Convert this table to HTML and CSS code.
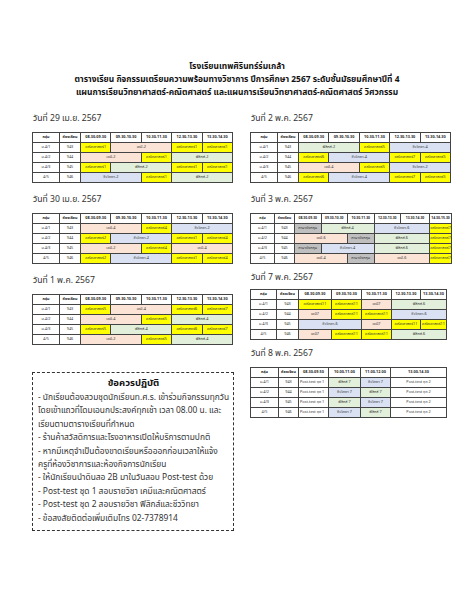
FILE: index.html
```html
<!DOCTYPE html>
<html lang="th">
<head>
<meta charset="utf-8">
<title>ตารางเรียน</title>
<link rel="stylesheet" href="styles.css">
</head>
<body>
<div class="page">
  <div class="title">
    <div>โรงเรียนเทพศิรินทร์ร่มเกล้า</div>
    <div>ตารางเรียน กิจกรรมเตรียมความพร้อมทางวิชาการ ปีการศึกษา 2567 ระดับชั้นมัธยมศึกษาปีที่ 4</div>
    <div>แผนการเรียนวิทยาศาสตร์-คณิตศาสตร์ และแผนการเรียนวิทยาศาสตร์-คณิตศาสตร์ วิศวกรรม</div>
  </div>
  <div class="cols">
    <div class="col col-left">
      <div class="day">วันที่ 29 เม.ย. 2567</div>
      <table class="sched s5">
        <colgroup><col class="cg"><col class="cr"><col><col><col><col><col></colgroup>
        <tr class="hd"><th>กลุ่ม</th><th>ห้องเรียน</th><th>08.30-09.30</th><th>09.30-10.30</th><th>10.30-11.30</th><th>12.30-13.30</th><th>13.30-14.30</th></tr>
        <tr><td>ม.4/1</td><td>943</td><td class="y">คณิตศาสตร์1</td><td class="p" colspan="2">เคมี-2</td><td class="y">คณิตศาสตร์1</td><td class="y">คณิตศาสตร์1</td></tr>
        <tr><td>ม.4/2</td><td>944</td><td class="p" colspan="2">เคมี-2</td><td class="y">คณิตศาสตร์1</td><td class="g" colspan="2">ฟิสิกส์-2</td></tr>
        <tr><td>ม.4/3</td><td>945</td><td class="y">คณิตศาสตร์1</td><td class="g" colspan="2">ฟิสิกส์-2</td><td class="y">คณิตศาสตร์1</td><td class="y">คณิตศาสตร์1</td></tr>
        <tr><td>4/5</td><td>946</td><td class="b" colspan="2">ชีววิทยา-2</td><td class="y">คณิตศาสตร์1</td><td class="g" colspan="2">ฟิสิกส์-2</td></tr>
      </table>

      <div class="day">วันที่ 30 เม.ย. 2567</div>
      <table class="sched s5">
        <colgroup><col class="cg"><col class="cr"><col><col><col><col><col></colgroup>
        <tr class="hd"><th>กลุ่ม</th><th>ห้องเรียน</th><th>08.30-09.30</th><th>09.30-10.30</th><th>10.30-11.30</th><th>12.30-13.30</th><th>13.30-14.30</th></tr>
        <tr><td>ม.4/1</td><td>943</td><td class="p" colspan="2">เคมี-4</td><td class="y">คณิตศาสตร์4</td><td class="b" colspan="2">ชีววิทยา-2</td></tr>
        <tr><td>ม.4/2</td><td>944</td><td class="y">คณิตศาสตร์2</td><td class="b" colspan="2">ชีววิทยา-2</td><td class="y">คณิตศาสตร์1</td><td class="y">คณิตศาสตร์4</td></tr>
        <tr><td>ม.4/3</td><td>945</td><td class="p" colspan="2">เคมี-2</td><td class="y">คณิตศาสตร์4</td><td class="p" colspan="2">เคมี-4</td></tr>
        <tr><td>4/5</td><td>946</td><td class="y">คณิตศาสตร์2</td><td class="b" colspan="2">ชีววิทยา-4</td><td class="y">คณิตศาสตร์1</td><td class="y">คณิตศาสตร์4</td></tr>
      </table>

      <div class="day">วันที่ 1 พ.ค. 2567</div>
      <table class="sched s5">
        <colgroup><col class="cg"><col class="cr"><col><col><col><col><col></colgroup>
        <tr class="hd"><th>กลุ่ม</th><th>ห้องเรียน</th><th>08.30-09.30</th><th>09.30-10.30</th><th>10.30-11.30</th><th>12.30-13.30</th><th>13.30-14.30</th></tr>
        <tr><td>ม.4/1</td><td>943</td><td class="y">คณิตศาสตร์5</td><td class="p" colspan="2">เคมี-4</td><td class="y">คณิตศาสตร์6</td><td class="y">คณิตศาสตร์7</td></tr>
        <tr><td>ม.4/2</td><td>944</td><td class="p" colspan="2">เคมี-4</td><td class="y">คณิตศาสตร์5</td><td class="g" colspan="2">ฟิสิกส์-4</td></tr>
        <tr><td>ม.4/3</td><td>945</td><td class="y">คณิตศาสตร์5</td><td class="g" colspan="2">ฟิสิกส์-4</td><td class="y">คณิตศาสตร์6</td><td class="y">คณิตศาสตร์7</td></tr>
        <tr><td>4/5</td><td>946</td><td class="p" colspan="2">เคมี-2</td><td class="y">คณิตศาสตร์5</td><td class="g" colspan="2">ฟิสิกส์-4</td></tr>
      </table>

      <div class="rules">
        <div class="rules-title">ข้อควรปฏิบัติ</div>
        <div class="rl">- นักเรียนต้องสวมชุดนักเรียนท.ศ.ร. เข้าร่วมกิจกรรมทุกวัน</div>
        <div class="rl">โดยเข้าแถวที่โดมเอนกประสงค์ทุกเช้า เวลา 08.00 น. และ</div>
        <div class="rl">เรียนตามตารางเรียนที่กำหนด</div>
        <div class="rl">- ร้านค้าสวัสดิการและโรงอาหารเปิดให้บริการตามปกติ</div>
        <div class="rl">- หากมีเหตุจำเป็นต้องขาดเรียนหรือออกก่อนเวลาให้แจ้ง</div>
        <div class="rl">ครูที่ห้องวิชาการและห้องกิจการนักเรียน</div>
        <div class="rl">- ให้นักเรียนนำดินสอ 2B มาในวันสอบ Post-test ด้วย</div>
        <div class="rl">- Post-test ชุด 1 สอบรายวิชา เคมีและคณิตศาสตร์</div>
        <div class="rl">- Post-test ชุด 2 สอบรายวิชา ฟิสิกส์และชีววิทยา</div>
        <div class="rl">- ข้อสงสัยติดต่อเพิ่มเติมโทร 02-7378914</div>
      </div>
    </div>

    <div class="col col-right">
      <div class="day">วันที่ 2 พ.ค. 2567</div>
      <table class="sched s5">
        <colgroup><col class="cg"><col class="cr"><col><col><col><col><col></colgroup>
        <tr class="hd"><th>กลุ่ม</th><th>ห้องเรียน</th><th>08.30-09.30</th><th>09.30-10.30</th><th>10.30-11.30</th><th>12.30-13.30</th><th>13.30-14.30</th></tr>
        <tr><td>ม.4/1</td><td>943</td><td class="g" colspan="2">ฟิสิกส์-2</td><td class="y">คณิตศาสตร์5</td><td class="b" colspan="2">ชีววิทยา-4</td></tr>
        <tr><td>ม.4/2</td><td>944</td><td class="y">คณิตศาสตร์6</td><td class="b" colspan="2">ชีววิทยา-4</td><td class="y">คณิตศาสตร์7</td><td class="y">คณิตศาสตร์5</td></tr>
        <tr><td>ม.4/3</td><td>945</td><td class="p" colspan="2">เคมี-4</td><td class="y">คณิตศาสตร์5</td><td class="b" colspan="2">ชีววิทยา-2</td></tr>
        <tr><td>4/5</td><td>946</td><td class="y">คณิตศาสตร์6</td><td class="b" colspan="2">ชีววิทยา-4</td><td class="y">คณิตศาสตร์7</td><td class="y">คณิตศาสตร์5</td></tr>
      </table>

      <div class="day">วันที่ 3 พ.ค. 2567</div>
      <table class="sched s6 tight">
        <colgroup><col class="cg2"><col class="cr2"><col><col><col><col><col class="c29"><col class="cl"></colgroup>
        <tr class="hd"><th>กลุ่ม</th><th>ห้องเรียน</th><th>08.30-09.30</th><th>09.30-10.30</th><th>10.30-11.30</th><th>12.30-13.30</th><th>13.30-14.30</th><th>14.30-15.30</th></tr>
        <tr><td>ม.4/1</td><td>943</td><td class="k">ภาษาอังกฤษ</td><td class="g" colspan="2">ฟิสิกส์-4</td><td class="b" colspan="2">ชีววิทยา-6</td><td class="y">คณิตศาสตร์7</td></tr>
        <tr><td>ม.4/2</td><td>944</td><td class="p" colspan="2">เคมี-6</td><td class="k">ภาษาอังกฤษ</td><td class="g" colspan="2">ฟิสิกส์-6</td><td class="y">คณิตศาสตร์7</td></tr>
        <tr><td>ม.4/3</td><td>945</td><td class="k">ภาษาอังกฤษ</td><td class="b" colspan="2">ชีววิทยา-4</td><td class="g" colspan="2">ฟิสิกส์-6</td><td class="y">คณิตศาสตร์7</td></tr>
        <tr><td>4/5</td><td>946</td><td class="p" colspan="2">เคมี-4</td><td class="k">ภาษาอังกฤษ</td><td class="p" colspan="2">เคมี-6</td><td class="y">คณิตศาสตร์7</td></tr>
      </table>

      <div class="day day-close">วันที่ 7 พ.ค. 2567</div>
      <table class="sched s7 tight">
        <colgroup><col class="c26"><col class="c22"><col class="c33"><col class="c30"><col class="c30"><col class="c29"><col></colgroup>
        <tr class="hd"><th>กลุ่ม</th><th>ห้องเรียน</th><th>08.30-09.30</th><th>09.30-10.30</th><th>10.30-11.30</th><th>12.30-13.30</th><th>13.30-14.30</th></tr>
        <tr><td>ม.4/1</td><td>943</td><td class="y">คณิตศาสตร์11</td><td class="y">คณิตศาสตร์11</td><td class="p">เคมี7</td><td class="g" colspan="2">ฟิสิกส์-6</td></tr>
        <tr><td>ม.4/2</td><td>944</td><td class="p">เคมี7</td><td class="y">คณิตศาสตร์11</td><td class="y">คณิตศาสตร์11</td><td class="b" colspan="2">ชีววิทยา-6</td></tr>
        <tr><td>ม.4/3</td><td>945</td><td class="b" colspan="2">ชีววิทยา-6</td><td class="p">เคมี7</td><td class="y">คณิตศาสตร์11</td><td class="y">คณิตศาสตร์11</td></tr>
        <tr><td>4/5</td><td>946</td><td class="p">เคมี7</td><td class="y">คณิตศาสตร์11</td><td class="y">คณิตศาสตร์11</td><td class="g" colspan="2">ฟิสิกส์-6</td></tr>
      </table>

      <div class="day">วันที่ 8 พ.ค. 2567</div>
      <table class="sched s7">
        <colgroup><col class="c28"><col class="c20"><col class="c30"><col class="c32"><col class="c30"><col></colgroup>
        <tr class="hd"><th>กลุ่ม</th><th>ห้องเรียน</th><th>08.30-09.50</th><th>10.00-11.00</th><th>11.00-12.00</th><th>13.00-14.30</th></tr>
        <tr><td>ม.4/1</td><td>943</td><td class="la">Post-test ชุด 1</td><td class="g">ฟิสิกส์ 7</td><td class="b">ชีววิทยา 7</td><td>Post-test ชุด 2</td></tr>
        <tr><td>ม.4/2</td><td>944</td><td class="la">Post-test ชุด 1</td><td class="b">ชีววิทยา 7</td><td class="g">ฟิสิกส์ 7</td><td>Post-test ชุด 2</td></tr>
        <tr><td>ม.4/3</td><td>945</td><td class="la">Post-test ชุด 1</td><td class="g">ฟิสิกส์ 7</td><td class="b">ชีววิทยา 7</td><td>Post-test ชุด 2</td></tr>
        <tr><td>4/5</td><td>946</td><td class="la">Post-test ชุด 1</td><td class="b">ชีววิทยา 7</td><td class="g">ฟิสิกส์ 7</td><td>Post-test ชุด 2</td></tr>
      </table>
    </div>
  </div>
</div>
</body>
</html>
```

FILE: styles.css
```css
html, body {
  margin: 0;
  padding: 0;
  background: #ffffff;
}
body {
  font-family: "Noto Sans Thai", "Tahoma", "Loma", "Garuda", "Liberation Sans", sans-serif;
  color: #222;
}
.page {
  width: 474px;
  padding-top: 60px;
}
.title {
  text-align: center;
  font-weight: bold;
  font-size: 8.4px;
  line-height: 13px;
  color: #111;
}
.cols {
  display: flex;
  gap: 16px;
  padding-left: 32px;
  margin-top: 13px;
}
.col-left { width: 202px; }
.col-right { width: 208px; }
.day {
  font-size: 8.6px;
  line-height: 14px;
  height: 14px;
  margin-bottom: 6px;
  padding-left: 1px;
  color: #333;
  white-space: nowrap;
}
.day-close { margin-bottom: 4px; }
.sched {
  border-collapse: collapse;
  table-layout: fixed;
  border: 1px solid #111;
  font-size: 3.8px;
  margin-bottom: 10px;
  color: #333;
}
.sched.tight { margin-bottom: 7px; }
.s5 { width: 201px; }
.s6 { width: 202px; }
.s7 { width: 197px; }
.sched th, .sched td {
  border: 1px solid #444;
  height: 9px;
  padding: 0;
  text-align: center;
  white-space: nowrap;
  overflow: hidden;
  line-height: 9px;
}
.sched th { font-weight: bold; color: #222; }
.s6 th { font-size: 3.4px; }
.cg { width: 27px; }
.cr { width: 21px; }
.cg2 { width: 24px; }
.cr2 { width: 20px; }
.cl { width: 22px; }
.c20 { width: 20px; }
.c22 { width: 22px; }
.c26 { width: 26px; }
.c28 { width: 28px; }
.c29 { width: 29px; }
.c30 { width: 30px; }
.c32 { width: 32px; }
.c33 { width: 33px; }
.y { background: #ffff00; }
.p { background: #fbe3d6; }
.g { background: #e2efda; }
.b { background: #d9e1f2; }
.k { background: #bfbfbf; }
.la { text-align: left !important; padding-left: 1px !important; }
.rules {
  margin-top: 27px;
  border: 1px dashed #333;
  padding: 3px 4px 5px 5px;
  font-size: 8.4px;
  line-height: 13.4px;
  color: #333;
}
.rl {
  white-space: nowrap;
  height: 13.4px;
}
.rules-title {
  text-align: center;
  font-weight: bold;
  font-size: 9.5px;
  line-height: 14px;
  height: 14px;
  margin-bottom: 1px;
  color: #111;
}
```
